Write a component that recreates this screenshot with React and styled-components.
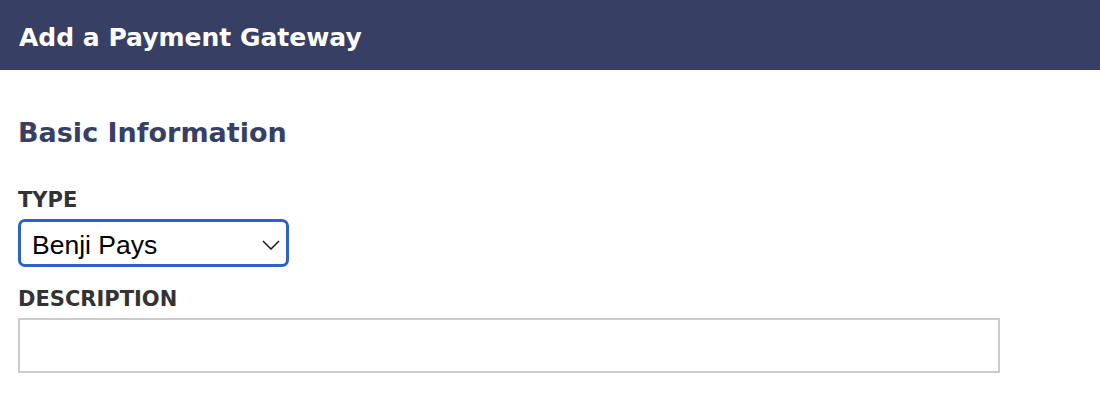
import React, { useState } from 'react'
import styled, { createGlobalStyle } from 'styled-components'

const GlobalStyle = createGlobalStyle`
  body {
    margin: 0;
    background: #fff;
    font-family: "DejaVu Sans", Verdana, sans-serif;
  }
`

const Header = styled.header`
  height: 70px;
  box-sizing: border-box;
  padding: 6px 0 0 19px;
  background: #373f64;
  h1 {
    margin: 0;
    color: #fff;
    font-size: 25px;
    line-height: 64px;
    font-weight: bold;
  }
`

const Content = styled.main`
  padding: 47px 0 0 18px;
  display: flex;
  flex-direction: column;
`

const SectionTitle = styled.h2`
  margin: 0 0 40px;
  color: #373f64;
  font-size: 27px;
  line-height: 32px;
  font-weight: bold;
`

const Field = styled.div`
  display: flex;
  flex-direction: column;
  margin-bottom: ${(p) => p.$gap || 0}px;
`

const Label = styled.label`
  margin-bottom: 8px;
  color: #333;
  font-size: 21px;
  line-height: 22px;
  font-weight: bold;
`

const SelectWrap = styled.div`
  position: relative;
  width: 271px;
  svg {
    position: absolute;
    right: 9px;
    top: 21px;
    pointer-events: none;
  }
`

const Select = styled.select`
  appearance: none;
  width: 100%;
  height: 48px;
  box-sizing: border-box;
  margin: 0;
  padding: 4px 36px 0 11px;
  border: 3px solid #2b61c8;
  border-radius: 7px;
  background: #fff;
  color: #000;
  font-family: "Liberation Sans", Arial, sans-serif;
  font-size: 26.5px;
  outline: none;
`

const TextInput = styled.input`
  width: 982px;
  height: 55px;
  box-sizing: border-box;
  margin: 0;
  padding: 0 10px;
  border: 2px solid #cccccc;
  border-radius: 0;
  font-family: "Liberation Sans", Arial, sans-serif;
  font-size: 22px;
  outline: none;
`

export default function App() {
  const [type, setType] = useState('benji')
  const [description, setDescription] = useState('')

  return (
    <>
      <GlobalStyle />
      <Header>
        <h1>Add a Payment Gateway</h1>
      </Header>
      <Content>
        <SectionTitle>Basic Information</SectionTitle>
        <Field $gap={21}>
          <Label htmlFor="gw-type">TYPE</Label>
          <SelectWrap>
            <Select id="gw-type" value={type} onChange={(e) => setType(e.target.value)}>
              <option value="benji">Benji Pays</option>
              <option value="stripe">Stripe</option>
              <option value="paypal">PayPal</option>
            </Select>
            <svg width="18" height="10" viewBox="0 0 18 10" fill="none">
              <path d="M1 1l8 8 8-8" stroke="#222" strokeWidth="1.6" />
            </svg>
          </SelectWrap>
        </Field>
        <Field>
          <Label htmlFor="gw-desc">DESCRIPTION</Label>
          <TextInput
            id="gw-desc"
            type="text"
            value={description}
            onChange={(e) => setDescription(e.target.value)}
          />
        </Field>
      </Content>
    </>
  )
}
